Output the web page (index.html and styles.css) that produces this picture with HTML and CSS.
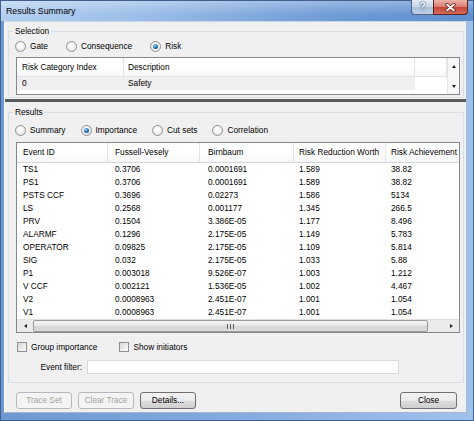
FILE: index.html
```html
<!DOCTYPE html>
<html>
<head>
<meta charset="utf-8">
<link rel="stylesheet" href="styles.css">
</head>
<body>
<div class="window">
  <div class="titlebar">
    <span class="title">Results Summary</span>
    <div class="caption">
      <span class="cap-btn help">?</span>
      <span class="cap-btn close">
        <svg width="11" height="9" viewBox="0 0 11 9">
          <path d="M2 1.5 L9 7.5 M9 1.5 L2 7.5" stroke="#5a1d17" stroke-width="3.4" stroke-linecap="round"/>
          <path d="M2 1.5 L9 7.5 M9 1.5 L2 7.5" stroke="#ffffff" stroke-width="1.8" stroke-linecap="round"/>
        </svg>
      </span>
    </div>
  </div>
  <div class="client">
    <fieldset class="group sel">
      <legend>Selection</legend>
      <div class="radios sel-radios">
        <label class="opt"><span class="radio"></span>Gate</label>
        <label class="opt"><span class="radio"></span>Consequence</label>
        <label class="opt"><span class="radio on"></span>Risk</label>
      </div>
      <div class="risk">
        <div class="risk-main">
          <div class="rk-head"><span>Risk Category Index</span><span>Description</span><span></span></div>
          <div class="rk-row"><span>0</span><span>Safety</span><span></span></div>
        </div>
        <div class="vscroll">
          <span class="sb-btn"><span class="arr up"></span></span>
          <span class="sb-btn"><span class="arr down"></span></span>
        </div>
      </div>
    </fieldset>
    <div class="splitter"></div>
    <fieldset class="group res">
      <legend>Results</legend>
      <div class="radios res-radios">
        <label class="opt"><span class="radio"></span>Summary</label>
        <label class="opt"><span class="radio on"></span>Importance</label>
        <label class="opt"><span class="radio"></span>Cut sets</label>
        <label class="opt"><span class="radio"></span>Correlation</label>
      </div>
      <div class="rt">
        <div class="rt-head"><span>Event ID</span><span>Fussell-Vesely</span><span>Birnbaum</span><span>Risk Reduction Worth</span><span>Risk Achievement</span></div>
        <div class="rt-row"><span>TS1</span><span>0.3706</span><span>0.0001691</span><span>1.589</span><span>38.82</span></div>
        <div class="rt-row"><span>PS1</span><span>0.3706</span><span>0.0001691</span><span>1.589</span><span>38.82</span></div>
        <div class="rt-row"><span>PSTS CCF</span><span>0.3696</span><span>0.02273</span><span>1.586</span><span>5134</span></div>
        <div class="rt-row"><span>LS</span><span>0.2568</span><span>0.001177</span><span>1.345</span><span>266.5</span></div>
        <div class="rt-row"><span>PRV</span><span>0.1504</span><span>3.386E-05</span><span>1.177</span><span>8.496</span></div>
        <div class="rt-row"><span>ALARMF</span><span>0.1296</span><span>2.175E-05</span><span>1.149</span><span>5.783</span></div>
        <div class="rt-row"><span>OPERATOR</span><span>0.09825</span><span>2.175E-05</span><span>1.109</span><span>5.814</span></div>
        <div class="rt-row"><span>SIG</span><span>0.032</span><span>2.175E-05</span><span>1.033</span><span>5.88</span></div>
        <div class="rt-row"><span>P1</span><span>0.003018</span><span>9.526E-07</span><span>1.003</span><span>1.212</span></div>
        <div class="rt-row"><span>V CCF</span><span>0.002121</span><span>1.536E-05</span><span>1.002</span><span>4.467</span></div>
        <div class="rt-row"><span>V2</span><span>0.0008963</span><span>2.451E-07</span><span>1.001</span><span>1.054</span></div>
        <div class="rt-row"><span>V1</span><span>0.0008963</span><span>2.451E-07</span><span>1.001</span><span>1.054</span></div>
        <div class="hscroll">
          <span class="hbtn"><span class="arr left"></span></span>
          <span class="thumb"><span class="grip"></span></span>
          <span class="track"></span>
          <span class="hbtn"><span class="arr right"></span></span>
        </div>
      </div>
      <div class="checks">
        <label class="opt"><span class="chk"></span>Group importance</label>
        <label class="opt"><span class="chk"></span>Show initiators</label>
      </div>
      <div class="filter">
        <span class="filter-label">Event filter:</span>
        <input type="text" class="filter-input">
      </div>
    </fieldset>
    <div class="actions">
      <button class="btn" disabled>Trace Set</button>
      <button class="btn" disabled>Clear Trace</button>
      <button class="btn">Details...</button>
      <button class="btn close-btn">Close</button>
    </div>
  </div>
</div>
</body>
</html>
```
FILE: styles.css
```css
* { box-sizing: border-box; }
html, body { margin: 0; padding: 0; }
body {
  width: 474px; height: 421px; overflow: hidden;
  background: #fff;
  font-family: "Liberation Sans", Arial, sans-serif;
  font-size: 8.3px; color: #000;
}
.window {
  width: 474px; height: 421px;
  display: flex; flex-direction: column;
  border: 1px solid #3f5f8c;
  background: linear-gradient(to right, #6d98d3, #84abe0 50%, #9fc2ec);
}
.titlebar {
  height: 20px; display: flex; align-items: flex-start;
  background:
    linear-gradient(to bottom, rgba(255,255,255,.3), rgba(255,255,255,0) 70%),
    linear-gradient(to right, #b4cff0, #9bbde8 30%, #6f9bd6 70%, #5f8fd0);
}
.title { font-size: 8.8px; line-height: 20px; padding-left: 5px; color: #000; }
.caption { margin-left: auto; margin-top: -1px; margin-right: 5px; display: flex; }
.cap-btn {
  height: 15px; display: flex; align-items: center; justify-content: center;
  border: 1px solid #4f6685; border-top: none;
}
.help {
  width: 22px; border-right: none; border-radius: 0 0 0 4px;
  background: linear-gradient(#e3ebf5, #c7d6e8 50%, #abc0db 51%, #c0d0e5);
  color: #fff; font-weight: bold; font-size: 10px; line-height: 14px;
  text-shadow: 0 0 2px #2b3f5c, 0 0 1px #2b3f5c;
}
.close {
  width: 35px; border-color: #5a2520; border-radius: 0 0 4px 0;
  background: linear-gradient(#ecb4a8, #da7b6c 50%, #c5473a 51%, #d66b58);
}
.client {
  flex: 1; margin: 0 6px 7px 3px;
  background: #f0f0f0;
  border: 1px solid #a8b6c7; border-left-color: #f8fbff; border-top-color: #c9d6e4;
  display: flex; flex-direction: column;
}
.group {
  margin: 4px 2px 0 3px; padding: 0; min-width: 0;
  border: 1px solid #d5dfe5;
}
.group legend { margin-left: 4px; padding: 0 2px; line-height: 10px; }
.sel { padding-bottom: 2px; }
.res { margin-top: 5px; padding-bottom: 8px; }

.radios { display: flex; align-items: center; height: 12px; }
.sel-radios { margin: 4px 0 0 6px; gap: 18px; }
.res-radios { margin: 7px 0 0 6px; gap: 15px; }
.opt { display: flex; align-items: center; gap: 4px; line-height: 12px; white-space: nowrap; }
.radio {
  width: 11px; height: 11px; border-radius: 50%;
  border: 1px solid #8f9092;
  background: radial-gradient(circle at 50% 40%, #ffffff 20%, #d9d9d9 100%);
  display: inline-flex; align-items: center; justify-content: center;
}
.radio.on::after {
  content: ""; width: 5px; height: 5px; border-radius: 50%;
  background: radial-gradient(circle at 40% 35%, #a6e0ff 0, #2b76b5 45%, #0e3358 100%);
}

.risk {
  margin: 5px 3px 0 7px; height: 38px;
  border: 1px solid #828790; background: #fff;
  display: flex;
}
.risk-main { flex: 1; display: flex; flex-direction: column; }
.rk-head, .rk-row { display: grid; grid-template-columns: 107px 291px 32px; }
.rk-head { height: 19px; border-bottom: 1px solid #e2e2e2; background: linear-gradient(#ffffff, #ffffff 50%, #f6f7f9); }
.rk-head span { line-height: 18px; border-right: 1px solid #e3e3e3; padding-left: 5px; white-space: nowrap; }
.rk-head span:nth-child(2) { padding-left: 4px; }
.rk-row { height: 13px; }
.rk-row span { line-height: 13px; padding-left: 5px; background: #efefef; }
.rk-row span:nth-child(2) { padding-left: 4px; }
.rk-row span:nth-child(3) { background: #fff; }
.vscroll {
  width: 12px; border-left: 1px solid #e4e4e4; background: #f7f7f7;
  display: flex; flex-direction: column; justify-content: space-between;
}
.sb-btn { height: 16px; display: flex; align-items: center; justify-content: center; }
.arr { width: 0; height: 0; border: 3px solid transparent; }
.arr.up { border-bottom-color: #222; border-top-width: 0; border-left-width: 2.5px; border-right-width: 2.5px; }
.arr.down { border-top-color: #222; border-bottom-width: 0; border-left-width: 2.5px; border-right-width: 2.5px; }
.arr.left { border-right-color: #222; border-left-width: 0; border-top-width: 2.5px; border-bottom-width: 2.5px; }
.arr.right { border-left-color: #222; border-right-width: 0; border-top-width: 2.5px; border-bottom-width: 2.5px; }

.rt {
  margin: 6px 3px 0 7px; height: 191px;
  border: 1px solid #828790; background: #fff;
  display: flex; flex-direction: column; overflow: hidden;
}
.rt-head, .rt-row { display: grid; grid-template-columns: 91px 92px 94px 92px 200px; flex: none; }
.rt-head { height: 20px; border-bottom: 1px solid #d5d5d5; background: linear-gradient(#ffffff, #ffffff 50%, #f5f6f8); }
.rt-head span { line-height: 19px; border-right: 1px solid #e3e3e3; white-space: nowrap; overflow: hidden; }
.rt-row { height: 13px; }
.rt-row span { line-height: 13px; white-space: nowrap; overflow: hidden; }
.rt-head span:nth-child(1), .rt-row span:nth-child(1) { padding-left: 6px; }
.rt-head span:nth-child(2), .rt-row span:nth-child(2) { padding-left: 7px; }
.rt-head span:nth-child(3), .rt-row span:nth-child(3) { padding-left: 8px; }
.rt-head span:nth-child(4), .rt-row span:nth-child(4) { padding-left: 5px; }
.rt-head span:nth-child(5), .rt-row span:nth-child(5) { padding-left: 5px; }

.hscroll {
  height: 13px; flex: none; display: flex;
  background: #ebebeb; border-top: 1px solid #e0e0e0;
}
.hbtn { width: 16px; display: flex; align-items: center; justify-content: center; }
.thumb {
  width: 395px; margin: 0; border: 1px solid #9a9a9a; border-radius: 2px;
  background: linear-gradient(#f4f4f4, #e6e6e6 50%, #d7d7d7 51%, #dcdcdc);
  display: flex; align-items: center; justify-content: center;
}
.grip {
  width: 7px; height: 5px;
  background: linear-gradient(to right, #5d5d5d 1px, transparent 1px);
  background-size: 3px 100%;
}
.track { flex: 1; }

.checks { display: flex; align-items: center; height: 12px; margin: 8px 0 0 8px; gap: 22px; }
.chk {
  width: 10px; height: 10px; border: 1px solid #8e8f8f;
  background: linear-gradient(135deg, #d8d8d8, #fbfbfb);
}
.filter { display: flex; align-items: center; height: 14px; margin-top: 7px; }
.filter-label { width: 73px; text-align: right; line-height: 14px; }
.filter-input {
  margin: 0 0 0 5px; width: 312px; height: 14px; padding: 0;
  border: 1px solid #dadada; background: #fff; outline: none;
  font: inherit;
}

.actions { display: flex; height: 17px; margin: 9px 9px 0 11px; gap: 6px; }
.btn {
  width: 56px; height: 17px; padding: 0; margin: 0;
  font-family: inherit; font-size: 8.3px; line-height: 15px;
  border: 1px solid #707070; border-radius: 3px;
  background: linear-gradient(#f2f2f2, #ebebeb 50%, #dddddd 51%, #cfcfcf);
  color: #000;
}
.btn:disabled { border-color: #b5b9bc; background: #f4f4f4; color: #a3a3a3; }
.close-btn { margin-left: auto; width: 57px; }
.splitter { height: 3px; margin-top: 1px; background: #5a5a5a; flex: none; }
```
